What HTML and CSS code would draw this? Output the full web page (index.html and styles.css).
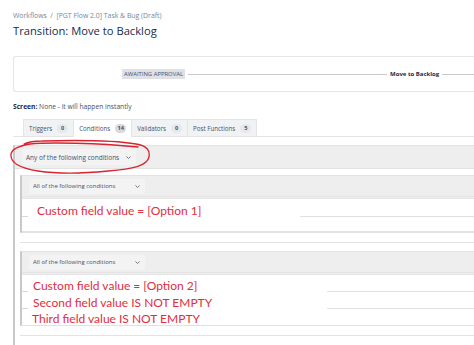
FILE: index.html
```html
<!DOCTYPE html>
<html lang="en">
<head>
    <meta charset="UTF-8">
    <title>Transition: Move to Backlog</title>
    <link rel="stylesheet" href="styles.css">
</head>
<body>
<div class="page">
    <div class="crumbs">Workflows &nbsp;/&nbsp; [PGT Flow 2.0] Task &amp; Bug (Draft)</div>
    <h1>Transition: Move to Backlog</h1>

    <div class="diagram">
        <span class="status">AWAITING APPROVAL</span>
        <span class="link long"></span>
        <span class="trans">Move to Backlog</span>
        <span class="link"></span>
    </div>

    <p class="screen"><b>Screen:</b> None - it will happen instantly</p>

    <div class="tabs">
        <div class="tab">Triggers <span class="count">0</span></div>
        <div class="tab active">Conditions <span class="count">14</span></div>
        <div class="tab">Validators <span class="count">0</span></div>
        <div class="tab">Post Functions <span class="count">5</span></div>
    </div>

    <div class="group outer">
        <div class="group-head">
            <span class="select">Any of the following conditions
                <svg width="7" height="5" viewBox="0 0 7 5"><path d="M1.5 1.5l2 2 2-2" fill="none" stroke="#6b778c" stroke-width="1"/></svg>
            </span>
        </div>
        <div class="group-body">
            <div class="slot">
                <div class="group inner">
                    <div class="group-head small">
                        <span class="select">All of the following conditions
                            <svg width="7" height="5" viewBox="0 0 7 5"><path d="M1.5 1.5l2 2 2-2" fill="none" stroke="#6b778c" stroke-width="1"/></svg>
                        </span>
                    </div>
                    <div class="rows first">
                        <div class="row tall">
                            <span class="stub"></span>
                            <span class="note wide">Custom field value = [Option 1]</span>
                            <span class="rule"></span>
                        </div>
                    </div>
                </div>
            </div>
            <div class="slot">
                <div class="group inner">
                    <div class="group-head small">
                        <span class="select">All of the following conditions
                            <svg width="7" height="5" viewBox="0 0 7 5"><path d="M1.5 1.5l2 2 2-2" fill="none" stroke="#6b778c" stroke-width="1"/></svg>
                        </span>
                    </div>
                    <div class="rows">
                        <div class="row">
                            <span class="stub"></span>
                            <span class="note">Custom field value = [Option 2]</span>
                            <span class="rule"></span>
                        </div>
                        <div class="row">
                            <span class="stub"></span>
                            <span class="note">Second field value IS NOT EMPTY</span>
                            <span class="rule"></span>
                        </div>
                        <div class="row last">
                            <span class="note">Third field value IS NOT EMPTY</span>
                        </div>
                    </div>
                </div>
            </div>
            <div class="slot empty"></div>
        </div>
    </div>

    <!-- hand-drawn circle around the top level operator -->
    <svg class="scribble" width="150" height="38" viewBox="0 0 150 38">
        <path d="M16 5 C 20 3, 26 2, 34 2 C 70 1, 110 2, 128 5 C 140 7, 142 12, 141 18 C 139 27, 125 30, 100 32 C 80 34, 50 35, 30 32 C 10 29, 2 23, 3 15 C 4 10, 10 7, 22 5 C 40 3, 90 4, 130 8"
              fill="none" stroke="#d9232f" stroke-width="1.3" stroke-linecap="round"/>
    </svg>
</div>
</body>
</html>
```

FILE: styles.css
```css
html, body {
    margin: 0;
    overflow: hidden;
    background: #fff;
}
.page {
    position: relative;
    width: 470px;
    padding: 11px 0 0 13px;
    font-family: "Open Sans", "Noto Sans", sans-serif;
    color: #172b4d;
}
.crumbs {
    font-size: 6.9px;
    line-height: 10px;
    color: #7a869a;
}
h1 {
    margin: 2px 0 0;
    font-size: 11.2px;
    line-height: 16px;
    font-weight: 400;
    color: #172b4d;
}
.diagram {
    display: flex;
    align-items: center;
    height: 34px;
    margin-top: 17px;
    padding-left: 108px;
    border: 1px solid #e6e6e6;
    border-right: none;
    border-radius: 3px 0 0 3px;
}
.status {
    background: #dfe1e6;
    color: #42526e;
    font-size: 5.9px;
    line-height: 10px;
    padding: 0 2px;
}
.link {
    flex: 1;
    height: 1px;
    margin: 0 3px;
    background: #c9c9c9;
}
.link.long {
    flex: 0 0 199px;
}
.trans {
    font-size: 6px;
    font-weight: 700;
    color: #172b4d;
}
.screen {
    margin: 10px 0 0;
    font-size: 6.7px;
    line-height: 10px;
    color: #42526e;
}
.screen b {
    color: #172b4d;
}
.tabs {
    display: flex;
    margin-top: 7px;
    padding-left: 10px;
    border-bottom: 1px solid #e4e4e4;
}
.tab {
    display: flex;
    align-items: center;
    gap: 5px;
    height: 16px;
    padding: 0 5px;
    background: #f1f2f4;
    border: 1px solid #e4e4e4;
    border-bottom: none;
    border-left: none;
    font-size: 6.2px;
    color: #42526e;
}
.tab:first-child {
    border-left: 1px solid #e4e4e4;
}
.tab.active {
    background: #fff;
    margin-bottom: -1px;
    height: 17px;
}
.count {
    display: inline-block;
    min-width: 7px;
    padding: 0 2px;
    line-height: 9px;
    border-radius: 5px;
    background: #e6e8eb;
    text-align: center;
    font-weight: 700;
    font-size: 5.6px;
}
.tab.active .count {
    background: #d7dae0;
}
.group {
    border: 1px solid #e2e2e2;
    border-left: 2px solid #c9c9c9;
}
.outer {
    margin-top: 8px;
    border-right: none;
    border-bottom: none;
}
.group-head {
    display: flex;
    align-items: center;
    height: 22px;
    padding-left: 7px;
    background: #eeeeee;
    border-bottom: 1px solid #e2e2e2;
}
.group-head.small {
    height: 20px;
    padding-left: 7px;
    border-bottom: 3px double #e4e4e4;
}
.select {
    display: flex;
    align-items: center;
    justify-content: space-between;
    width: 106px;
    height: 16px;
    padding: 0 4px 0 4px;
    background: #f3f3f3;
    border-radius: 2px;
    font-size: 6.5px;
    color: #42526e;
}
.small .select {
    width: 108px;
    height: 15px;
    font-size: 6px;
}
.group-body {
    padding-left: 5px;
}
.slot {
    padding: 6px 8px 9px 0;
    border-bottom: 1px solid #e2e2e2;
}
.slot + .slot {
    padding-top: 8px;
}
.slot.empty {
    height: 20px;
    border-bottom: none;
}
.rows.first {
    padding-bottom: 14px;
    border-bottom: 1px solid #e2e2e2;
}
.row {
    display: flex;
    align-items: flex-end;
    height: 17px;
}
.row.tall {
    height: 18px;
}
.row.last {
    height: 16px;
}
.stub {
    width: 6px;
    height: 100%;
    border-bottom: 1px solid #d6d6d6;
}
.rule {
    flex: 1;
    height: 100%;
    border-bottom: 1px solid #e0e0e0;
}
.note {
    width: 294px;
    padding-left: 5px;
    margin-bottom: -2px;
    font-family: "Lato", "Open Sans", sans-serif;
    font-size: 12px;
    line-height: 16px;
    color: #df2d3d;
    white-space: nowrap;
}
.note.wide {
    width: 263px;
    padding-left: 9px;
}
.row.last .note {
    padding-left: 10px;
}
.scribble {
    position: absolute;
    left: 8px;
    top: 139px;
}
```
